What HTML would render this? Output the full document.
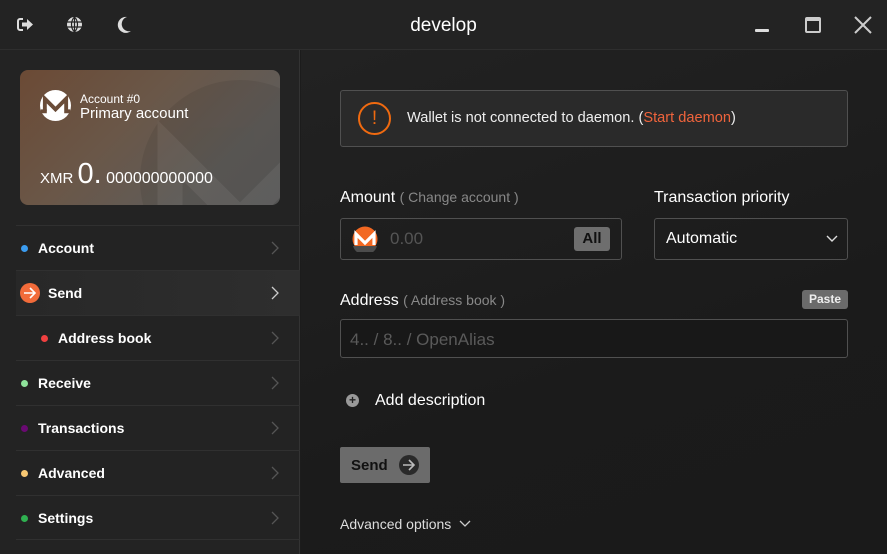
<!DOCTYPE html>
<html><head><meta charset="utf-8"><style>
*{box-sizing:border-box;margin:0;padding:0}
body{width:887px;height:554px;overflow:hidden;background:#1c1c1c;font-family:"Liberation Sans",sans-serif;color:#fff;position:relative}
.top{position:absolute;left:0;top:0;width:887px;height:50px;background:#232323;border-bottom:1px solid #2e2e2e}
.title{position:absolute;left:0;width:887px;top:15px;text-align:center;font-size:19px;color:#fff}
.side{position:absolute;left:0;top:50px;width:300px;height:504px;background:#232323;border-right:1px solid #333}
.card{position:absolute;left:20px;top:20px;width:260px;height:135px;border-radius:8px;overflow:hidden;background:linear-gradient(135deg,#6b4a35 0%,#6a5748 40%,#5f5c59 75%,#5a5a5a 100%)}
.item{position:absolute;left:16px;width:284px;height:45px;border-top:1px solid #303030;font-weight:bold;font-size:14px}
.item span{position:absolute;top:14px}
.dot{position:absolute;width:7px;height:7px;border-radius:50%;top:19px;left:5px}
.chev{position:absolute;right:20px;top:15px;width:10px;height:14px}
.main{position:absolute;left:301px;top:50px;width:586px;height:504px;background:linear-gradient(160deg,#222 0%,#1b1b1b 60%,#1a1a1a 100%)}
.box{position:absolute;border:1px solid #505050;border-radius:3px}
.lbl{position:absolute;font-size:16px;color:#fff}
.lbl small{font-size:14px;color:#888}
</style></head><body>
<div class="top">
<svg style="position:absolute;left:17px;top:17px" width="17" height="15" viewBox="0 0 17 15"><path d="M6 2H3a2 2 0 0 0-2 2v7a2 2 0 0 0 2 2h3" stroke="#ddd" stroke-width="2" fill="none"/><path d="M5 5.5h5V2l6 5.5-6 5.5V9.5H5z" fill="#ddd"/></svg>
<svg style="position:absolute;left:66px;top:16px" width="17" height="17" viewBox="0 0 17 17"><circle cx="8.5" cy="8.5" r="7.5" fill="#ddd"/><path d="M1 6h15M1 11h15M8.5 1v15M8.5 1c-4 4-4 11 0 15M8.5 1c4 4 4 11 0 15" stroke="#232323" stroke-width="1.2" fill="none"/></svg>
<svg style="position:absolute;left:117px;top:16px" width="15" height="17" viewBox="0 0 15 17"><path d="M10 1A8 8 0 1 0 14 15 7 7 0 0 1 10 1z" fill="#ddd"/></svg>
<div class="title">develop</div>
<div style="position:absolute;left:755px;top:29px;width:14px;height:3px;background:#ddd;border-radius:1px"></div>
<div style="position:absolute;left:805px;top:17px;width:16px;height:16px;border:2px solid #ccc;border-top-width:4px;border-radius:2px"></div>
<svg style="position:absolute;left:854px;top:16px" width="18" height="18" viewBox="0 0 18 18"><path d="M1 1l16 16M17 1L1 17" stroke="#ccc" stroke-width="2"/></svg>
</div>
<div class="side">
<div class="card">
<svg style="position:absolute;left:120px;top:10px;opacity:.07" width="200" height="200" viewBox="0 0 200 200"><circle cx="100" cy="100" r="100" fill="#000"/><path d="M30 180V70l70 70 70-70v110" stroke="#888" stroke-width="25" fill="none"/></svg>
<svg style="position:absolute;left:20px;top:20px" width="31" height="31" viewBox="0 0 32 32"><circle cx="16" cy="16" r="16" fill="#fff"/><path d="M5 22V9l11 11 11-11v13h4" stroke="#6a4c38" stroke-width="4" fill="none"/><path d="M1 22h6" stroke="#6a4c38" stroke-width="4"/></svg>
<div style="position:absolute;left:60px;top:22px;font-size:12px">Account #0</div>
<div style="position:absolute;left:60px;top:35px;font-size:15px">Primary account</div>
<div style="position:absolute;left:20px;top:88px;white-space:nowrap"><span style="font-size:15px">XMR </span><span style="font-size:29px">0.</span><span style="font-size:16px"> 000000000000</span></div>
</div>
<div class="item" style="top:175px"><div class="dot" style="background:#3b9cf0"></div><span style="left:22px">Account</span><svg class="chev" viewBox="0 0 10 14"><path d="M2 1l6 6-6 6" stroke="#555" stroke-width="1.3" fill="none"/></svg></div>
<div class="item" style="top:220px;background:linear-gradient(90deg,#282828,#2e2e2e)"><div style="position:absolute;left:4px;top:12px;width:20px;height:20px;border-radius:50%;background:#f26b3a"></div><svg style="position:absolute;left:7px;top:16px" width="14" height="12" viewBox="0 0 14 12"><path d="M1 6h11M7 1l5 5-5 5" stroke="#fff" stroke-width="1.6" fill="none"/></svg><span style="left:32px">Send</span><svg class="chev" viewBox="0 0 10 14"><path d="M2 1l6 6-6 6" stroke="#ccc" stroke-width="1.3" fill="none"/></svg></div>
<div class="item" style="top:265px"><div class="dot" style="background:#f04040;left:25px"></div><span style="left:42px">Address book</span><svg class="chev" viewBox="0 0 10 14"><path d="M2 1l6 6-6 6" stroke="#555" stroke-width="1.3" fill="none"/></svg></div>
<div class="item" style="top:310px"><div class="dot" style="background:#8fe39b"></div><span style="left:22px">Receive</span><svg class="chev" viewBox="0 0 10 14"><path d="M2 1l6 6-6 6" stroke="#555" stroke-width="1.3" fill="none"/></svg></div>
<div class="item" style="top:355px"><div class="dot" style="background:#6a0a72"></div><span style="left:22px">Transactions</span><svg class="chev" viewBox="0 0 10 14"><path d="M2 1l6 6-6 6" stroke="#555" stroke-width="1.3" fill="none"/></svg></div>
<div class="item" style="top:400px"><div class="dot" style="background:#f7c772"></div><span style="left:22px">Advanced</span><svg class="chev" viewBox="0 0 10 14"><path d="M2 1l6 6-6 6" stroke="#555" stroke-width="1.3" fill="none"/></svg></div>
<div class="item" style="top:445px;border-bottom:1px solid #303030"><div class="dot" style="background:#2fb050"></div><span style="left:22px">Settings</span><svg class="chev" viewBox="0 0 10 14"><path d="M2 1l6 6-6 6" stroke="#555" stroke-width="1.3" fill="none"/></svg></div>
</div>
<div class="main">
<div class="box" style="left:39px;top:40px;width:508px;height:57px;background:#2a2a2a"></div>
<div style="position:absolute;left:57px;top:52px;width:33px;height:33px;border:2px solid #f06a10;border-radius:50%;color:#f06a10;text-align:center;font-size:19px;line-height:29px">!</div>
<div style="position:absolute;left:106px;top:60px;font-size:14.6px;color:#eee">Wallet is not connected to daemon. (<span style="color:#f0643c">Start daemon</span>)</div>
<div class="lbl" style="left:39px;top:139px">Amount <small>( Change account )</small></div>
<div class="lbl" style="left:353px;top:139px">Transaction priority</div>
<div class="box" style="left:39px;top:168px;width:282px;height:42px"></div>
<svg style="position:absolute;left:51px;top:176px" width="26" height="26" viewBox="0 0 26 26"><circle cx="13" cy="13" r="12.5" fill="#f26822"/><path d="M1 20h24a12.5 12.5 0 0 1-24 0z" fill="#4c4c4c"/><path d="M4 19V8l9 9 9-9v11" stroke="#fff" stroke-width="3.2" fill="none"/></svg>
<div style="position:absolute;left:89px;top:179px;font-size:17px;color:#555">0.00</div>
<div style="position:absolute;left:273px;top:177px;width:36px;height:24px;background:#6e6e6e;border-radius:3px;color:#111;font-weight:bold;font-size:15px;text-align:center;line-height:24px">All</div>
<div class="box" style="left:353px;top:168px;width:194px;height:42px"></div>
<div style="position:absolute;left:365px;top:180px;font-size:16px">Automatic</div>
<svg style="position:absolute;left:525px;top:185px" width="12" height="8" viewBox="0 0 12 8"><path d="M1 1l5 5 5-5" stroke="#ddd" stroke-width="1.4" fill="none"/></svg>
<div class="lbl" style="left:39px;top:242px">Address <small>( Address book )</small></div>
<div style="position:absolute;left:501px;top:240px;width:46px;height:19px;background:#6b6b6b;border-radius:3px;font-size:12px;font-weight:bold;text-align:center;line-height:19px;color:#eee">Paste</div>
<div class="box" style="left:39px;top:269px;width:508px;height:39px;background:#181818"></div>
<div style="position:absolute;left:49px;top:280px;font-size:17px;color:#5a5a5a">4.. / 8.. / OpenAlias</div>
<div style="position:absolute;left:45px;top:344px;width:13px;height:13px;border-radius:50%;background:#999;color:#222;font-size:12px;font-weight:bold;text-align:center;line-height:13px">+</div>
<div style="position:absolute;left:74px;top:342px;font-size:16px">Add description</div>
<div style="position:absolute;left:39px;top:397px;width:90px;height:36px;background:#6b6b6b;border-radius:2px"></div>
<div style="position:absolute;left:50px;top:407px;font-size:15px;font-weight:bold;color:#111">Send</div>
<div style="position:absolute;left:98px;top:405px;width:20px;height:20px;border-radius:50%;background:#2a2a2a"></div>
<svg style="position:absolute;left:101px;top:409px" width="14" height="12" viewBox="0 0 14 12"><path d="M1 6h11M7 1l5 5-5 5" stroke="#bbb" stroke-width="1.6" fill="none"/></svg>
<div style="position:absolute;left:39px;top:466px;font-size:14px;color:#ddd">Advanced options</div>
<svg style="position:absolute;left:158px;top:470px" width="12" height="8" viewBox="0 0 12 8"><path d="M1 1l5 5 5-5" stroke="#ccc" stroke-width="1.3" fill="none"/></svg>
</div>
</body></html>
